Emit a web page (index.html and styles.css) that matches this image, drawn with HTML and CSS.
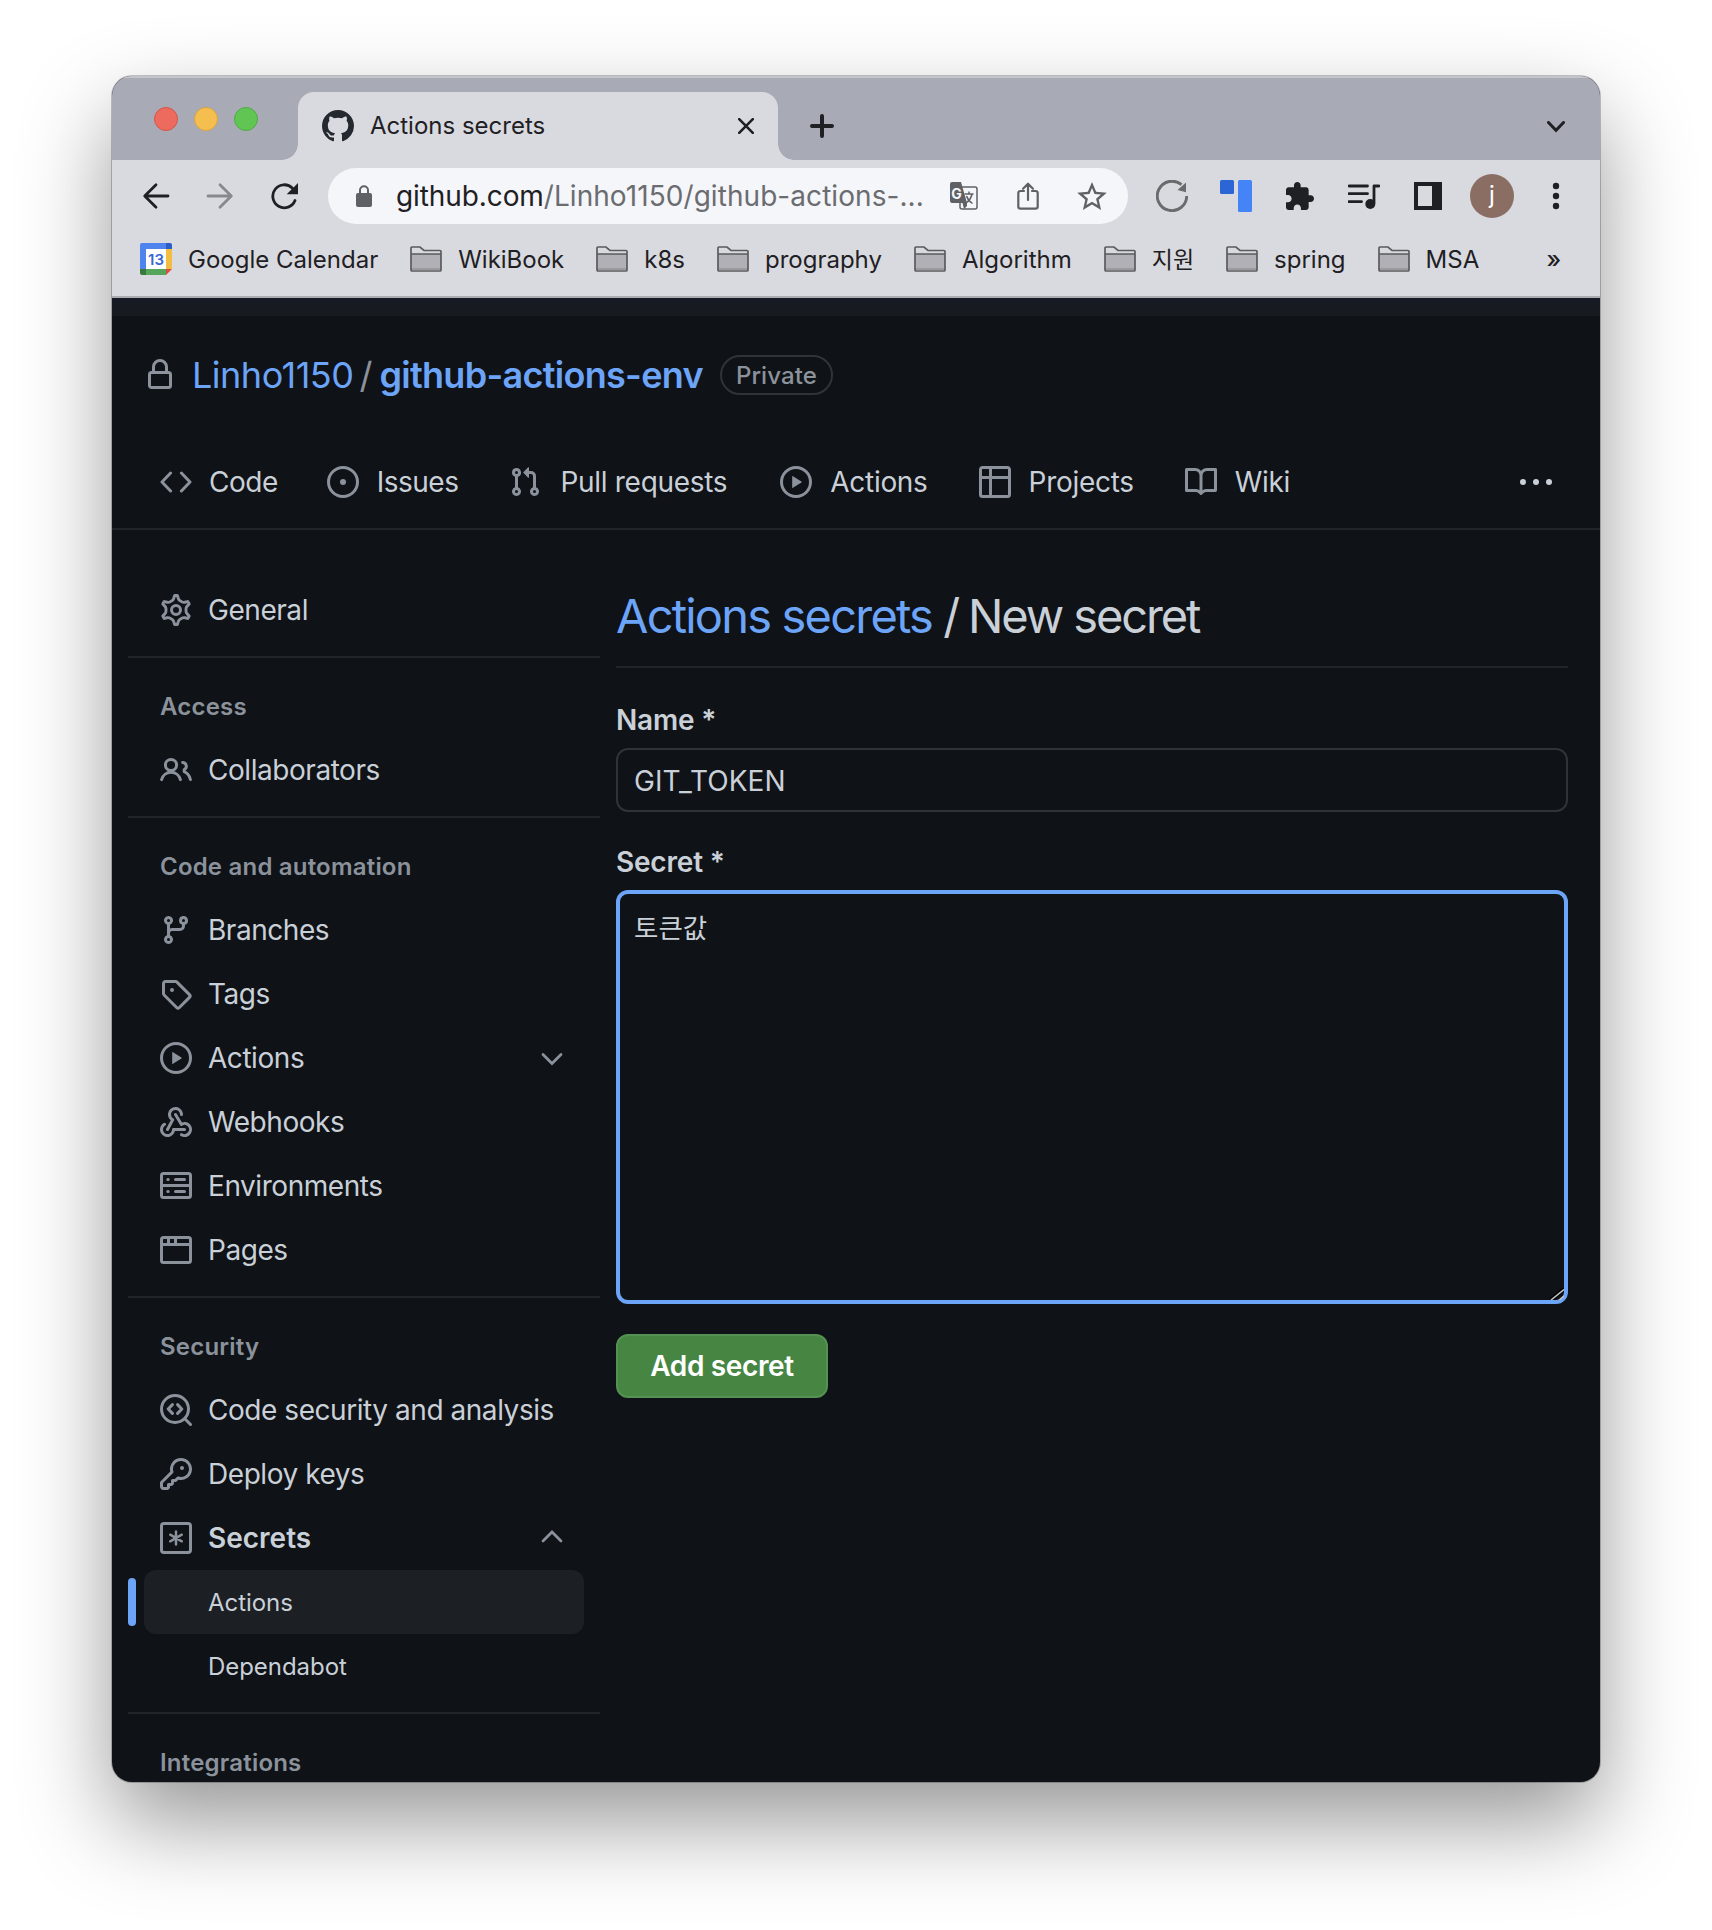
FILE: index.html
```html
<!DOCTYPE html>
<html lang="en">
<head>
  <meta charset="UTF-8">
  <meta name="viewport" content="width=device-width, initial-scale=1.0">
  <title>Actions secrets</title>
  <link rel="stylesheet" href="styles.css">
</head>
<body>
  <!-- shared icons -->
  <svg class="defs">
    <symbol id="folder" viewBox="0 0 32 26">
      <path d="M1 24V2q0-1 1-1h8l4 4h16q1 0 1 1v18q0 1-1 1H2q-1 0-1-1z" fill="#d9dae0"/>
      <path d="M1 8h30v16H1z" fill="#b0b0b6"/>
      <path d="M1 22h30v2H1z" fill="#9b9b9f"/>
      <path d="M1 24V2q0-1 1-1h8l4 3.5h16q1 0 1 1V24q0 1-1 1H2q-1 0-1-1zM1 8h30" fill="none" stroke="#5b5b5d" stroke-width="1.7"/>
    </symbol>
    <symbol id="play" viewBox="0 0 16 16">
      <circle cx="8" cy="8" r="7.25" fill="none" stroke="currentColor" stroke-width="1.5"/>
      <path d="M6.1 5.3q0-.4.4-.2l4.2 2.7q.3.2 0 .4l-4.2 2.7q-.4.2-.4-.2z"/>
    </symbol>
  </svg>

  <div class="window">
    <div class="tabstrip">
      <div class="lights">
        <span class="light red"></span>
        <span class="light yellow"></span>
        <span class="light green"></span>
      </div>
      <div class="tab">
        <svg class="favicon" viewBox="0 0 16 16"><path d="M8 0C3.58 0 0 3.58 0 8c0 3.54 2.29 6.53 5.47 7.59.4.07.55-.17.55-.38 0-.19-.01-.82-.01-1.49-2.01.37-2.53-.49-2.69-.94-.09-.23-.48-.94-.82-1.13-.28-.15-.68-.52-.01-.53.63-.01 1.08.58 1.23.82.72 1.21 1.87.87 2.33.66.07-.52.28-.87.51-1.07-1.78-.2-3.64-.89-3.64-3.95 0-.87.31-1.59.82-2.15-.08-.2-.36-1.02.08-2.12 0 0 .67-.21 2.2.82.64-.18 1.32-.27 2-.27s1.36.09 2 .27c1.53-1.04 2.2-.82 2.2-.82.44 1.1.16 1.92.08 2.12.51.56.82 1.27.82 2.15 0 3.07-1.87 3.75-3.65 3.95.29.25.54.73.54 1.48 0 1.07-.01 1.93-.01 2.2 0 .21.15.46.55.38A8.01 8.01 0 0016 8c0-4.42-3.58-8-8-8z"/></svg>
        <span class="tab-title">Actions secrets</span>
        <svg class="tab-close" viewBox="0 0 16 16"><path d="M1.2 1.2l13.6 13.6M14.8 1.2L1.2 14.8"/></svg>
      </div>
      <svg class="new-tab" viewBox="0 0 24 24"><path d="M12 2v20M2 12h20"/></svg>
      <svg class="tab-search" viewBox="0 0 18 12"><path d="M1.5 1.5L9 9.3l7.500-7.800"/></svg>
    </div>

    <div class="toolbar">
      <div class="cell"><svg width="28" height="28" viewBox="0 0 28 28" class="line dark"><path d="M26 14H3M14 2.700L2.700 14 14 25.300"/></svg></div>
      <div class="cell"><svg width="28" height="28" viewBox="0 0 28 28" class="line faded"><path d="M2 14h23M14 2.700L25.300 14 14 25.300"/></svg></div>
      <div class="cell"><svg width="28" height="28" viewBox="0 0 28 28" class="line dark"><path d="M25 18.500A11.500 11.500 0 1 1 22.500 6.200"/><path d="M28 1v11.300H16.700z" fill="#1f2023" stroke="none"/></svg></div>
      <div class="omnibox">
        <div class="cell"><svg width="16" height="22" viewBox="0 0 16 22"><rect y="8" width="16" height="14" rx="2" fill="#5f6166"/><path d="M4 9V5.200a4 4 0 0 1 8 0V9" fill="none" stroke="#5f6166" stroke-width="2"/></svg></div>
        <div class="url">github.com<span>/Linho1150/github-actions-...</span></div>
        <div class="cell">
          <svg width="28" height="28" viewBox="0 0 28 28">
            <rect x="10" y="5" width="17" height="22" rx="2" fill="none" stroke="#5f6166" stroke-width="1.500"/>
            <path d="M2 0h9l6 21v3l-3 3-1.500-6H2q-2 0-2-2V2q0-2 2-2z" fill="#5f6166"/>
            <text x="1.300" y="17" class="g-letter">G</text>
            <path d="M14.500 12h9M19 9.500V12M22 12c-.8 4-3 7-6 9M16.500 14c1 3 3 5.500 6 7.500" fill="none" stroke="#5f6166" stroke-width="1.500"/>
          </svg>
        </div>
        <div class="cell"><svg width="24" height="28" viewBox="0 0 24 28" class="line gray"><path d="M8 9H4.500Q2.300 9 2.300 11.200v13.300q0 2.200 2.200 2.200h15q2.200 0 2.200-2.200V11.200q0-2.200-2.200-2.200H16M12 18V2M7 6.700l5-5 5 5"/></svg></div>
        <div class="cell"><svg width="30" height="28" viewBox="2 2 20 19"><path fill="#5f6166" d="M22 9.240l-7.190-.62L12 2 9.190 8.630 2 9.240l5.460 4.730L5.820 21 12 17.270 18.180 21l-1.630-7.030L22 9.240zM12 15.400l-3.760 2.270 1-4.280-3.320-2.880 4.380-.38L12 6.100l1.710 4.040 4.380.38-3.320 2.880 1 4.280L12 15.400z"/></svg></div>
      </div>
      <div class="cell"><svg width="32" height="32" viewBox="0 0 32 32"><path d="M30.700 16A14.700 14.700 0 1 1 25.500 4.700" fill="none" stroke="#6a6b6d" stroke-width="2.900"/><path d="M30 2.500v9.800l-8.500-2.200z" fill="#6a6b6d"/></svg></div>
      <div class="cell"><svg width="32" height="32" viewBox="0 0 32 32"><rect width="14" height="14" rx="1.500" fill="#2b66d4"/><rect x="18" width="14" height="32" rx="1.500" fill="#4484f6"/></svg></div>
      <div class="cell"><svg width="28" height="28" viewBox="2 1 21 21"><path fill="#1f2023" d="M20.500 11H19V7c0-1.100-.9-2-2-2h-4V3.500C13 2.120 11.880 1 10.500 1S8 2.120 8 3.500V5H4c-1.100 0-1.990.9-1.990 2v3.800H3.500c1.490 0 2.700 1.210 2.700 2.700s-1.210 2.700-2.700 2.700H2V20c0 1.100.9 2 2 2h3.800v-1.500c0-1.490 1.210-2.700 2.700-2.700 1.490 0 2.700 1.210 2.700 2.700V22H17c1.100 0 2-.9 2-2v-4h1.500c1.380 0 2.500-1.120 2.500-2.500S21.880 11 20.500 11z"/></svg></div>
      <div class="cell"><svg width="32" height="26" viewBox="0 0 32 26" class="line dark"><path d="M1 3h18.500M1 10.700h18.500M1 18.700h12.500M31 3h-5v17"/><circle cx="22.300" cy="21" r="5" fill="#1f2023" stroke="none"/></svg></div>
      <div class="cell"><svg width="28" height="28" viewBox="0 0 28 28"><path fill="#1f2023" fill-rule="evenodd" d="M0 0h28v28H0zM4 4v20h14V4z"/></svg></div>
      <div class="cell"><span class="avatar">j</span></div>
      <div class="cell"><svg width="8" height="28" viewBox="0 0 8 28" fill="#1f2023"><circle cx="4" cy="4" r="3.200"/><circle cx="4" cy="14" r="3.200"/><circle cx="4" cy="24" r="3.200"/></svg></div>
    </div>

    <div class="bookmarks">
      <div class="bookmark">
        <svg width="32" height="32" viewBox="0 0 32 32">
          <path d="M0 2q0-2 2-2h24v6H6v20H0z" fill="#4f83ee"/>
          <path d="M26 0h4q2 0 2 2v4h-6z" fill="#2a5fc9"/>
          <path d="M26 6h6v20h-6z" fill="#f1bd42"/>
          <path d="M6 26h20v6H6z" fill="#55a55a"/>
          <path d="M0 26h6v6H2q-2 0-2-2z" fill="#38793f"/>
          <path d="M26 26h6l-6 6z" fill="#dc4c3f"/>
          <path d="M6 6h20v20H6z" fill="#fff"/>
          <text x="16" y="22" text-anchor="middle" class="cal-day">13</text>
        </svg>
        <span>Google Calendar</span>
      </div>
      <div class="bookmark"><svg class="folder"><use href="#folder"/></svg><span>WikiBook</span></div>
      <div class="bookmark"><svg class="folder"><use href="#folder"/></svg><span>k8s</span></div>
      <div class="bookmark"><svg class="folder"><use href="#folder"/></svg><span>prography</span></div>
      <div class="bookmark"><svg class="folder"><use href="#folder"/></svg><span>Algorithm</span></div>
      <div class="bookmark"><svg class="folder"><use href="#folder"/></svg><span class="ko">지원</span></div>
      <div class="bookmark"><svg class="folder"><use href="#folder"/></svg><span>spring</span></div>
      <div class="bookmark"><svg class="folder"><use href="#folder"/></svg><span>MSA</span></div>
      <span class="more">»</span>
    </div>

    <div class="page-top"></div>

    <header class="repo-header">
      <div class="repo-title">
        <svg class="icon" viewBox="0 0 16 16"><path fill-rule="evenodd" d="M4 4v2h-.25A1.750 1.750 0 002 7.750v5.500c0 .966.784 1.750 1.750 1.750h8.500A1.750 1.750 0 0014 13.250v-5.500A1.750 1.750 0 0012.250 6H12V4a4 4 0 10-8 0zm6.500 2V4a2.500 2.500 0 10-5 0v2h5zM12 7.500h.25a.25.25 0 01.25.25v5.500a.25.25 0 01-.25.25h-8.500a.25.25 0 01-.25-.25v-5.500a.25.25 0 01.25-.25H12z"/></svg>
        <a class="owner">Linho1150</a>
        <span class="slash">/</span>
        <a class="repo">github-actions-env</a>
        <span class="badge">Private</span>
      </div>
      <nav class="repo-nav">
        <a><svg class="icon stroke" viewBox="0 0 16 16"><path d="M5.300 3.500L1 8l4.300 4.500M10.700 3.500L15 8l-4.300 4.500"/></svg><span>Code</span></a>
        <a><svg class="icon" viewBox="0 0 16 16"><circle cx="8" cy="8" r="7.250" fill="none" stroke="currentColor" stroke-width="1.500"/><circle cx="8" cy="8" r="1.500"/></svg><span>Issues</span></a>
        <a class="pulls"><svg class="icon" viewBox="0 0 16 16"><path fill-rule="evenodd" d="M7.177 3.073L9.573.677A.25.25 0 0110 .854v4.792a.25.25 0 01-.427.177L7.177 3.427a.25.25 0 010-.354zM3.750 2.500a.75.75 0 100 1.500.75.75 0 000-1.500zm-2.250.75a2.250 2.250 0 113 2.122v5.256a2.251 2.251 0 11-1.500 0V5.372A2.250 2.250 0 011.500 3.250zM11 2.500h-1V4h1a1 1 0 011 1v5.628a2.251 2.251 0 101.500 0V5A2.500 2.500 0 0011 2.500zm1 10.250a.75.75 0 111.500 0 .75.75 0 01-1.500 0zM3.750 12a.75.75 0 100 1.500.75.75 0 000-1.500z"/></svg><span>Pull requests</span></a>
        <a><svg class="icon"><use href="#play"/></svg><span>Actions</span></a>
        <a><svg class="icon" viewBox="0 0 16 16"><path fill-rule="evenodd" d="M0 1.750C0 .784.784 0 1.750 0h12.500C15.216 0 16 .784 16 1.750v12.500A1.750 1.750 0 0114.250 16H1.750A1.750 1.750 0 010 14.250V1.750zM1.500 6.500v7.750c0 .138.112.25.25.25H5v-8H1.500zM5 5H1.500V1.750a.25.25 0 01.25-.25H5V5zm1.500 1.500v8h7.750a.25.25 0 00.25-.25V6.500h-8zm8-1.500h-8V1.500h7.750a.25.25 0 01.25.25V5z"/></svg><span>Projects</span></a>
        <a><svg class="icon" viewBox="0 0 16 16"><path fill-rule="evenodd" d="M0 1.750A.75.75 0 01.75 1h4.253c1.227 0 2.317.59 3 1.501A3.744 3.744 0 0111.006 1h4.245a.75.75 0 01.75.75v10.500a.75.75 0 01-.75.75h-4.507a2.250 2.250 0 00-1.591.659l-.622.621a.75.75 0 01-1.060 0l-.622-.621A2.250 2.250 0 005.258 13H.75a.75.75 0 01-.75-.75V1.750zm8.755 3a2.250 2.250 0 012.250-2.250H14.500v9h-3.757c-.71 0-1.400.201-1.992.572l.004-7.322zm-1.504 7.324l.004-5.073-.002-2.253A2.250 2.250 0 005.003 2.500H1.500v9h3.757a3.750 3.750 0 011.994.574z"/></svg><span>Wiki</span></a>
        <svg class="kebab" viewBox="0 0 34 8"><circle cx="4" cy="4" r="3"/><circle cx="17" cy="4" r="3"/><circle cx="30" cy="4" r="3"/></svg>
      </nav>
    </header>

    <div class="layout">
      <aside class="sidebar">
        <ul>
          <li><svg class="icon" viewBox="0 0 16 16"><path transform="translate(8 8) scale(1.115) translate(-8 -8)" fill="none" stroke="currentColor" stroke-width="1.300" d="M7.429 1.525a6.593 6.593 0 011.142 0c.036.003.108.036.137.146l.289 1.105c.147.56.55.967.997 1.189.174.086.341.183.501.29.417.278.97.423 1.530.27l1.102-.303c.11-.03.175.016.195.046.219.31.41.641.573.989.014.031.022.11-.059.19l-.815.806c-.411.406-.562.957-.53 1.456a4.588 4.588 0 010 .582c-.032.499.119 1.050.53 1.456l.815.806c.08.08.073.159.059.19a6.494 6.494 0 01-.573.99c-.02.029-.086.074-.195.045l-1.103-.303c-.559-.153-1.112-.008-1.529.27-.16.107-.327.204-.5.29-.449.222-.851.628-.998 1.189l-.289 1.105c-.029.11-.101.143-.137.146a6.613 6.613 0 01-1.142 0c-.036-.003-.108-.037-.137-.146l-.289-1.105c-.147-.56-.55-.967-.997-1.189a4.502 4.502 0 01-.501-.29c-.417-.278-.97-.423-1.530-.27l-1.102.303c-.11.03-.175-.016-.195-.046a6.492 6.492 0 01-.573-.989c-.014-.031-.022-.11.059-.19l.815-.806c.411-.406.562-.957.53-1.456a4.587 4.587 0 010-.582c.032-.499-.119-1.050-.53-1.456l-.815-.806c-.08-.08-.073-.159-.059-.19a6.440 6.440 0 01.573-.99c.02-.029.086-.075.195-.045l1.103.303c.559.153 1.112.008 1.529-.27.16-.107.327-.204.5-.29.449-.222.851-.628.998-1.189l.289-1.105c.029-.11.101-.143.137-.146z"/><circle cx="8" cy="8" r="2.250" fill="none" stroke="currentColor" stroke-width="1.500"/></svg><span>General</span></li>
        </ul>

        <h3>Access</h3>
        <ul>
          <li><svg class="icon stroke" viewBox="0 0 16 16"><circle cx="5.500" cy="5.500" r="2.800"/><path d="M.8 12.800a4.850 4.850 0 0 1 9.400 0M11.300 4.250a1.900 1.900 0 0 1 .8 3.600v1c1.600.7 2.600 1.900 3.100 3.900"/></svg><span>Collaborators</span></li>
        </ul>

        <h3>Code and automation</h3>
        <ul>
          <li><svg class="icon" viewBox="0 0 16 16"><path fill-rule="evenodd" d="M11.750 2.500a.75.75 0 100 1.500.75.75 0 000-1.500zm-2.250.75a2.250 2.250 0 113 2.122V6A2.500 2.500 0 0110 8.500H6a1 1 0 00-1 1v1.128a2.251 2.251 0 11-1.500 0V5.372a2.250 2.250 0 111.500 0v1.836A2.492 2.492 0 016 7h4a1 1 0 001-1v-.628A2.250 2.250 0 019.500 3.250zM4.250 12a.75.75 0 100 1.500.75.75 0 000-1.500zM3.500 3.250a.75.75 0 111.500 0 .75.75 0 01-1.500 0z"/></svg><span>Branches</span></li>
          <li><svg class="icon" viewBox="0 0 16 16"><path fill-rule="evenodd" d="M2.500 7.775V2.750a.25.25 0 01.25-.25h5.025a.25.25 0 01.177.073l6.250 6.250a.25.25 0 010 .354l-5.025 5.025a.25.25 0 01-.354 0l-6.250-6.250a.25.25 0 01-.073-.177zm-1.500 0V2.750C1 1.784 1.784 1 2.750 1h5.025c.464 0 .91.184 1.238.513l6.250 6.250a1.750 1.750 0 010 2.474l-5.026 5.026a1.750 1.750 0 01-2.474 0l-6.250-6.250A1.750 1.750 0 011 7.775zM6 5a1 1 0 100 2 1 1 0 000-2z"/></svg><span>Tags</span></li>
          <li><svg class="icon"><use href="#play"/></svg><span>Actions</span><svg class="chevron" viewBox="0 0 32 32"><path d="M7 12.500l9 9 9-9"/></svg></li>
          <li><svg class="icon" viewBox="0 0 16 16"><path d="M5.500 4.250a2.250 2.250 0 014.500 0 .75.75 0 001.500 0 3.750 3.750 0 10-6.140 2.889l-2.272 4.258a.75.75 0 001.324.706L7 7.250a.75.75 0 00-.309-1.015A2.250 2.250 0 015.500 4.250z"/><path d="M7.364 3.607a.75.75 0 011.030.257l2.608 4.349a3.750 3.750 0 11-.628 6.785.75.75 0 01.752-1.299 2.250 2.250 0 10-.033-3.880.75.75 0 01-1.030-.256L7.107 4.636a.75.75 0 01.257-1.030z"/><path d="M2.900 8.776A.75.75 0 012.625 9.800 2.250 2.250 0 106 11.750a.75.75 0 01.75-.751h5.500a.75.75 0 010 1.500H7.425a3.751 3.751 0 11-5.550-3.998.75.75 0 011.024.274z"/></svg><span>Webhooks</span></li>
          <li><svg class="icon stroke" viewBox="0 0 16 16"><rect x=".75" y="1.750" width="14.500" height="12" rx="1"/><path d="M.75 7.750h14.500M3.900 4.750h.2M7.750 4.750h4.500M3.900 10.750h.2M7.750 10.750h4.500"/></svg><span>Environments</span></li>
          <li><svg class="icon stroke" viewBox="0 0 16 16"><rect x=".75" y="1.750" width="14.500" height="12.500" rx="1"/><path d="M.75 5.250h14.500M4.250 2v3M7.750 2v3"/></svg><span>Pages</span></li>
        </ul>

        <h3>Security</h3>
        <ul>
          <li><svg class="icon stroke" viewBox="0 0 16 16"><circle cx="7.500" cy="7.500" r="6.750"/><path d="M12.400 12.400l2.850 2.850M6.200 5.300L4.100 7.500l2.100 2.200M8.800 5.300l2.100 2.200-2.100 2.200"/></svg><span>Code security and analysis</span></li>
          <li><svg class="icon" viewBox="0 0 16 16"><path fill-rule="evenodd" d="M6.500 5.500a4 4 0 112.731 3.795.75.75 0 00-.768.18L7.440 10.500H6.250a.75.75 0 00-.75.75v1.190l-.06.06H4.250a.75.75 0 00-.75.75v1.190l-.06.06H1.750a.25.25 0 01-.25-.25v-1.690l5.024-5.023a.75.75 0 00.181-.768A3.995 3.995 0 016.500 5.500zm4-5.500a5.500 5.500 0 00-5.348 6.788L.22 11.720a.75.75 0 00-.22.53v2C0 15.216.784 16 1.750 16h2a.75.75 0 00.53-.22l.5-.5a.75.75 0 00.22-.53V14h.75a.75.75 0 00.53-.22l.5-.5a.75.75 0 00.22-.53V12h.75a.75.75 0 00.53-.22l.932-.932A5.500 5.500 0 1010.500 0zm.5 6a1 1 0 100-2 1 1 0 000 2z"/></svg><span>Deploy keys</span></li>
          <li class="open"><svg class="icon stroke" viewBox="0 0 16 16"><rect x=".75" y=".75" width="14.500" height="14.500" rx="1.250"/><path stroke-width="1.250" d="M8 4.700v6.600M5.100 6.350l5.800 3.300M5.100 9.650l5.800-3.300"/></svg><span>Secrets</span><svg class="chevron" viewBox="0 0 32 32"><path d="M7 19l9-9 9 9"/></svg></li>
          <li class="sub current"><span>Actions</span></li>
          <li class="sub"><span>Dependabot</span></li>
        </ul>

        <h3>Integrations</h3>
      </aside>

      <main class="content">
        <h1><a>Actions secrets</a><span class="sep">/</span>New secret</h1>
        <label>Name *</label>
        <div class="input">GIT_TOKEN</div>
        <label>Secret *</label>
        <div class="input textarea">
          <span>토큰값</span>
          <svg class="grip" viewBox="0 0 14 12"><path d="M1 12L14 1" stroke="#000" stroke-width="4"/><path d="M1 12L14 1.500M9 12l5-4" stroke="#c4c4c4" stroke-width="1.600"/></svg>
        </div>
        <button>Add secret</button>
      </main>
    </div>
  </div>
</body>
</html>
```

FILE: styles.css
```css
* {
  box-sizing: border-box;
}
body {
  margin: 0;
  height: 1930px;
  overflow: hidden;
  background: #fff;
  font-family: Inter, "Noto Sans CJK KR", sans-serif;
}
svg {
  display: block;
  flex: none;
}
ul {
  margin: 0;
  padding: 0;
  list-style: none;
}
.defs {
  width: 0;
  height: 0;
  position: absolute;
}
.window {
  width: 1488px;
  height: 1706px;
  margin: 76px auto 0;
  overflow: hidden;
  border-radius: 20px;
  background: #0f1216;
  box-shadow: 0 0 0 1px rgba(0, 0, 0, 0.22), 0 40px 90px rgba(0, 0, 0, 0.41);
}

/* browser chrome */
.tabstrip {
  display: flex;
  align-items: center;
  height: 84px;
  padding-left: 42px;
  background: #a8aab6;
  border-top: 2px solid #c3c4cc;
}
.lights {
  display: flex;
  gap: 16px;
  width: 144px;
}
.light {
  width: 24px;
  height: 24px;
  border-radius: 50%;
  border: 1px solid;
}
.red {
  background: #ed6a5e;
  border-color: #d55549;
}
.yellow {
  background: #f5bf4f;
  border-color: #d9a441;
}
.green {
  background: #61c554;
  border-color: #50aa45;
}
.tab {
  position: relative;
  display: flex;
  align-items: center;
  align-self: flex-end;
  width: 480px;
  height: 68px;
  padding: 0 24px;
  border-radius: 16px 16px 0 0;
  background: #d9dae0;
}
.tab::before,
.tab::after {
  content: "";
  position: absolute;
  bottom: 0;
  width: 16px;
  height: 16px;
}
.tab::before {
  left: -16px;
  background: radial-gradient(circle at 0 0, transparent 15.5px, #d9dae0 16px);
}
.tab::after {
  right: -16px;
  background: radial-gradient(circle at 100% 0, transparent 15.5px, #d9dae0 16px);
}
.favicon {
  width: 32px;
  height: 32px;
  fill: #24292f;
}
.tab-title {
  flex: 1;
  margin: 0 0 2px 16px;
  font-size: 24px;
  color: #1f2023;
}
.tab-close {
  width: 16px;
  height: 16px;
  stroke: #1f2023;
  stroke-width: 2.6;
  stroke-linecap: round;
}
.new-tab {
  width: 24px;
  height: 24px;
  margin: 14px 0 0 32px;
  stroke: #1f2023;
  stroke-width: 4;
  stroke-linecap: round;
}
.tab-search {
  width: 18px;
  height: 12px;
  margin: 15px 35px 0 auto;
  fill: none;
  stroke: #1f2023;
  stroke-width: 3;
  stroke-linecap: round;
}
.toolbar {
  display: flex;
  align-items: center;
  height: 72px;
  padding: 0 12px;
  background: #d9dae0;
}
.cell {
  display: flex;
  flex: none;
  align-items: center;
  justify-content: center;
  width: 64px;
}
.line {
  fill: none;
  stroke-width: 2.8;
  stroke-linecap: round;
  stroke-linejoin: round;
}
.dark {
  stroke: #1f2023;
}
.faded {
  stroke: #88898e;
}
.gray {
  stroke: #5f6166;
  stroke-width: 2.2;
}
.omnibox {
  display: flex;
  align-items: center;
  width: 800px;
  height: 56px;
  margin: 0 12px;
  padding: 0 4px;
  border-radius: 28px;
  background: #f5f6fa;
}
.url {
  flex: 1;
  font-size: 28px;
  letter-spacing: -0.1px;
  white-space: nowrap;
  color: #1f2023;
}
.url span {
  letter-spacing: 0.06px;
  color: #6b6c70;
}
.g-letter {
  font-size: 14px;
  font-weight: 700;
  fill: #f5f6fa;
}
.avatar {
  width: 44px;
  height: 44px;
  border-radius: 50%;
  background: #8a6e64;
  color: #fff;
  font-size: 24px;
  line-height: 42px;
  text-align: center;
}
.bookmarks {
  display: flex;
  align-items: center;
  gap: 32px;
  height: 66px;
  padding: 0 39px 10px 28px;
  background: #d9dae0;
  border-bottom: 2px solid #abacb0;
  font-size: 24px;
  color: #1f2023;
}
.bookmark {
  display: flex;
  align-items: center;
  gap: 16px;
  white-space: nowrap;
}
.folder {
  width: 32px;
  height: 26px;
}
.ko {
  font-size: 23px;
  margin-bottom: 2px;
}
.cal-day {
  font-size: 15px;
  font-weight: 600;
  fill: #3367d6;
}
.more {
  margin-left: auto;
  font-weight: 500;
}
.page-top {
  height: 18px;
  background: linear-gradient(#171a23, #171b1f);
}

/* repository header */
.icon {
  width: 32px;
  height: 32px;
  color: #8b929c;
  fill: currentColor;
}
.icon.stroke {
  fill: none;
  stroke: currentColor;
  stroke-width: 1.5;
  stroke-linecap: round;
  stroke-linejoin: round;
}
.repo-header {
  border-bottom: 2px solid #21252a;
}
.repo-title {
  display: flex;
  align-items: center;
  height: 116px;
  padding: 2px 0 0 32px;
  font-size: 36px;
  color: #6ca4f8;
}
.owner {
  margin-left: 16px;
  letter-spacing: -0.5px;
}
.slash {
  margin: 0 7px 0 6px;
  color: #8b929c;
}
.repo {
  font-weight: 600;
  letter-spacing: -0.7px;
}
.badge {
  height: 40px;
  margin-left: 17px;
  padding: 0 14px;
  border: 2px solid #30343a;
  border-radius: 20px;
  font-size: 24px;
  font-weight: 500;
  line-height: 37px;
  letter-spacing: 0.1px;
  color: #8b929c;
}
.repo-nav {
  display: flex;
  align-items: center;
  gap: 50px;
  height: 96px;
  padding: 4px 47px 0 48px;
  font-size: 28px;
  letter-spacing: -0.3px;
  color: #c9d0d8;
}
.repo-nav a {
  display: flex;
  align-items: center;
  gap: 18px;
}
.repo-nav a:nth-child(-n+2) {
  margin-right: -1px;
  letter-spacing: -0.5px;
}
.repo-nav a:first-child {
  gap: 17px;
}
.repo-nav .pulls {
  gap: 19px;
  margin: 0 2px;
}
.repo-nav a:nth-child(n+4) {
  margin-left: 1px;
}
.kebab {
  width: 34px;
  height: 8px;
  margin: 0 0 1px auto;
  fill: #c9d0d8;
}

/* settings page */
.layout {
  display: flex;
  gap: 16px;
  padding: 48px 32px 0 16px;
}
.sidebar {
  width: 472px;
}
.sidebar ul {
  padding: 0 16px 14px;
}
.sidebar li {
  display: flex;
  align-items: center;
  height: 64px;
  padding: 0 16px;
  border-radius: 12px;
  font-size: 28px;
  letter-spacing: -0.45px;
  color: #c9d0d8;
  white-space: nowrap;
}
.sidebar li span {
  margin-left: 16px;
}
.sidebar h3 {
  height: 82px;
  margin: 0;
  padding: 17px 32px 0;
  border-top: 2px solid #21252a;
  font-size: 24px;
  font-weight: 600;
  line-height: 64px;
  letter-spacing: 0.2px;
  color: #8b929c;
}
.chevron {
  width: 32px;
  height: 32px;
  margin-left: auto;
  fill: none;
  stroke: #8b929c;
  stroke-width: 2.8;
  stroke-linecap: round;
}
.sidebar .open {
  font-weight: 600;
  letter-spacing: 0;
}
.sidebar .sub {
  position: relative;
  padding-left: 48px;
  font-size: 24px;
  letter-spacing: -0.05px;
}
.sidebar .current {
  background: #1c1f24;
}
.current::before {
  content: "";
  position: absolute;
  left: -16px;
  width: 8px;
  height: 48px;
  border-radius: 4px;
  background: #6ca4f8;
}
.content {
  flex: 1;
}
.content h1 {
  height: 90px;
  margin: 0;
  border-bottom: 2px solid #21252a;
  font-size: 47px;
  font-weight: 400;
  line-height: 75px;
  letter-spacing: -2.1px;
  color: #c9d0d8;
}
.content h1 a {
  color: #6ca4f8;
  letter-spacing: -1.8px;
}
.sep {
  margin: 0 10px 0 11px;
}
.content label {
  display: block;
  margin: 31px 0 7px;
  font-size: 28px;
  font-weight: 600;
  line-height: 42px;
  letter-spacing: -0.2px;
  color: #c9d0d8;
}
.input {
  height: 64px;
  margin-bottom: 29px;
  padding: 1px 16px 0;
  border: 2px solid #30343a;
  border-radius: 12px;
  font-size: 28px;
  line-height: 60px;
  color: #c9d0d8;
}
.input + label {
  margin-top: 29px;
}
.textarea {
  position: relative;
  height: 414px;
  margin-bottom: 30px;
  padding: 4px 14px;
  border: 4px solid #6ca4f8;
  font-size: 26.5px;
}
.grip {
  position: absolute;
  right: 0;
  bottom: 0;
  width: 14px;
  height: 12px;
}
button {
  display: block;
  width: 212px;
  height: 64px;
  border: 2px solid #549152;
  border-radius: 12px;
  background: #468642;
  color: #fff;
  font: 600 28px Inter, sans-serif;
  letter-spacing: -0.35px;
}
```
